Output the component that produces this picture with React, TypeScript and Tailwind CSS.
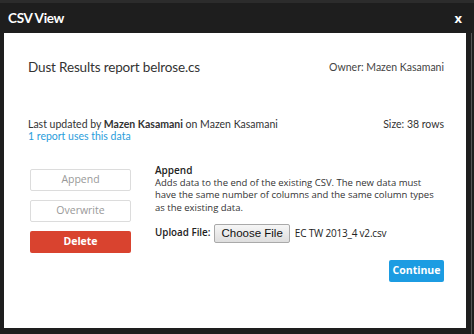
import React from "react";

export default function App() {
  const lato = { fontFamily: '"Lato", "Open Sans", sans-serif' };
  return (
    <div
      className="w-[474px] h-[334px] bg-[#1e1e1e] flex flex-col overflow-hidden"
      style={{ fontFamily: '"Open Sans", "Liberation Sans", sans-serif' }}
    >
      {/* title bar */}
      <div className="h-[33px] shrink-0 flex items-center justify-between pl-[8px] pr-[12px] border-t-[3px] border-[#2c2c2c]">
        <span className="text-white text-[13.5px] font-bold tracking-[-0.3px]" style={lato}>
          CSV View
        </span>
        <span className="text-white text-[13px] font-bold leading-none">x</span>
      </div>
      <div className="flex flex-1 min-h-0">
        <div className="w-[4px] shrink-0" />
        <div className="w-[462px] h-[295px] bg-white text-[#333] flex flex-col pl-[24px] pr-[22px] pt-[25px]">
          <div className="flex items-center justify-between" style={lato}>
            <span className="text-[13.5px] leading-[18px] tracking-[-0.15px] text-[#333]">Dust Results report belrose.cs</span>
            <span className="text-[10.5px] leading-[14px] text-[#444]">Owner: Mazen Kasamani</span>
          </div>
          <div className="mt-[42px] flex justify-between text-[10.5px] leading-[12px]" style={lato}>
            <span>
              Last updated by <span className="font-bold">Mazen Kasamani</span> on Mazen Kasamani
            </span>
            <span>Size: 38 rows</span>
          </div>
          <div className="text-[10.5px] leading-[12px] text-[#2a9ddb]" style={lato}>1 report uses this data</div>
          <div className="flex mt-[22px]">
            <div className="w-[101px] ml-[2px] flex flex-col gap-[9px] mt-[5px] shrink-0">
              <button className="h-[22px] border border-[#dcdcdc] rounded-[2px] text-[10.5px] text-[#999] bg-white">Append</button>
              <button className="h-[22px] border border-[#dcdcdc] rounded-[2px] text-[10.5px] text-[#999] bg-white">Overwrite</button>
              <button className="h-[22px] rounded-[2px] text-[10.5px] font-bold text-white bg-[#d9432f]">Delete</button>
            </div>
            <div className="ml-[24px] flex-1 flex flex-col">
              <div className="text-[10px] leading-[12.5px] font-semibold text-[#222]">Append</div>
              <div className="text-[9.5px] leading-[12.5px] text-[#333]">
                Adds data to the end of the existing CSV. The new data must have the same number of columns and the same column types as the existing data.
              </div>
              <div className="flex items-center mt-[10px]">
                <span className="text-[9.8px] font-semibold text-[#222]">Upload File:</span>
                <button
                  className="ml-[4px] h-[19px] px-[6px] border border-[#a9a9a9] rounded-[2px] text-[11.5px] leading-none text-[#111] bg-gradient-to-b from-[#f6f6f6] to-[#dedede]"
                  style={{ fontFamily: '"Liberation Sans", Arial, sans-serif' }}
                >
                  Choose File
                </button>
                <span className="ml-[5px] text-[10px] text-[#222] tracking-[-0.2px]">EC TW 2013_4 v2.csv</span>
              </div>
              <div className="flex justify-end mt-[17px]">
                <button className="w-[55px] h-[22px] rounded-[2px] bg-[#1c9ce2] text-white text-[10.5px] font-bold">Continue</button>
              </div>
            </div>
          </div>
        </div>
        <div className="flex-1 flex">
          <div className="w-[5px]" />
          <div className="w-[1px] bg-[#555]" />
        </div>
      </div>
    </div>
  );
}
